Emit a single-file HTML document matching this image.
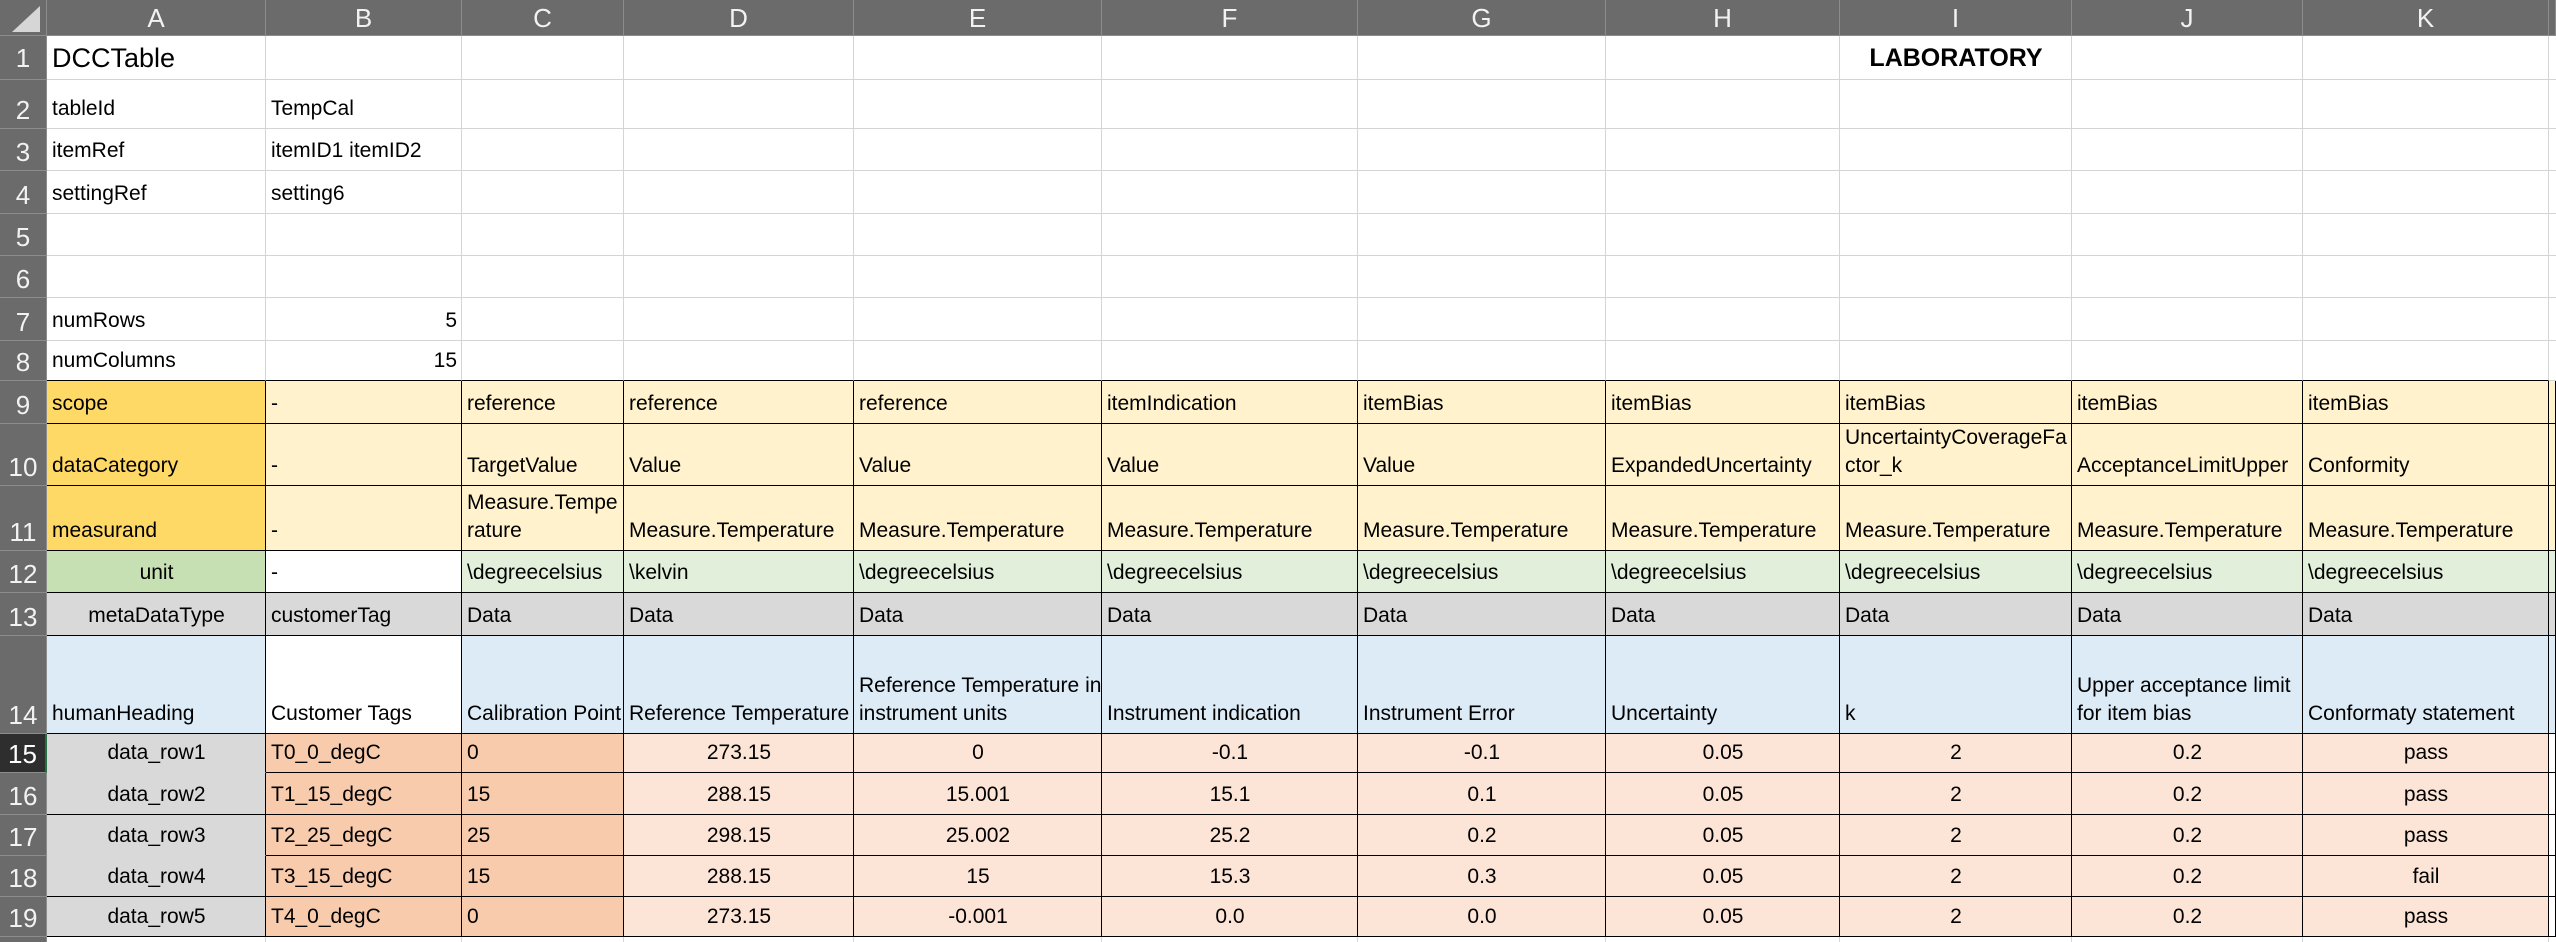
<!DOCTYPE html>
<html><head><meta charset="utf-8"><style>
html,body{margin:0;padding:0;background:#fff;width:2556px;height:942px;overflow:hidden}
table{border-collapse:separate;border-spacing:0;table-layout:fixed;width:2556px;font-family:"Liberation Sans",sans-serif;font-size:21px;color:#000}
td{border-right:1px solid #d4d4d4;border-bottom:1px solid #d4d4d4;padding:0 4px 5px 5px;vertical-align:bottom;white-space:nowrap;overflow:hidden;line-height:28px;box-sizing:border-box}
td.h{background:#6b6b6b;color:#f2f2f2;text-align:center;vertical-align:middle;font-size:26px;border-right:1px solid #8c8c8c;border-bottom:1px solid #8c8c8c;padding:0}
td.rn{background:#6b6b6b;color:#f2f2f2;text-align:center;font-size:26px;border-right:1px solid #8c8c8c;border-bottom:1px solid #8c8c8c;padding:0 0 4px 0;vertical-align:bottom}
td.sel{background:#2e2e2e;color:#fff;border-right:2px solid #217346}
tr.k td:not(.rn){border-right:1px solid #000;border-bottom:1px solid #000}
tr.kb td:not(.rn):not(.l){border-bottom:1px solid #000}
td.l{border-right:none}
.y{background:#ffd966}.c{background:#fff2cc}.g{background:#e2efda}.gA{background:#c6e0b4}.gr{background:#d9d9d9}.b{background:#ddebf7}.o{background:#f8cbad}.p{background:#fce4d6}.w{background:#fff}
.ctr{text-align:center}.r{text-align:right}
tr.k td.nb{border-bottom:1px solid #d9d9d9}
</style></head><body>
<table>
<colgroup><col style="width:47px"><col style="width:219px"><col style="width:196px"><col style="width:162px"><col style="width:230px"><col style="width:248px"><col style="width:256px"><col style="width:248px"><col style="width:234px"><col style="width:232px"><col style="width:231px"><col style="width:246px"><col style="width:7px"></colgroup>
<tr style="height:36px"><td class="h" style="position:relative"><svg width="47" height="36" style="position:absolute;left:0;top:0"><polygon points="40,6 40,32 12,32" fill="#d6d6d6"/></svg></td><td class="h">A</td><td class="h">B</td><td class="h">C</td><td class="h">D</td><td class="h">E</td><td class="h">F</td><td class="h">G</td><td class="h">H</td><td class="h">I</td><td class="h">J</td><td class="h">K</td><td class="h"></td></tr>
<tr style="height:44px"><td class="rn" style="vertical-align:middle;padding:0">1</td><td style="font-size:27px;vertical-align:middle;padding-bottom:0">DCCTable</td><td></td><td></td><td></td><td></td><td></td><td></td><td></td><td class="ctr" style="font-weight:bold;font-size:25px;vertical-align:middle;padding-bottom:0;overflow:visible">LABORATORY</td><td></td><td></td><td class="l"></td></tr>
<tr style="height:49px"><td class="rn">2</td><td>tableId</td><td>TempCal</td><td></td><td></td><td></td><td></td><td></td><td></td><td></td><td></td><td></td><td class="l"></td></tr>
<tr style="height:42px"><td class="rn">3</td><td>itemRef</td><td>itemID1 itemID2</td><td></td><td></td><td></td><td></td><td></td><td></td><td></td><td></td><td></td><td class="l"></td></tr>
<tr style="height:43px"><td class="rn">4</td><td>settingRef</td><td>setting6</td><td></td><td></td><td></td><td></td><td></td><td></td><td></td><td></td><td></td><td class="l"></td></tr>
<tr style="height:42px"><td class="rn">5</td><td></td><td></td><td></td><td></td><td></td><td></td><td></td><td></td><td></td><td></td><td></td><td class="l"></td></tr>
<tr style="height:42px"><td class="rn">6</td><td></td><td></td><td></td><td></td><td></td><td></td><td></td><td></td><td></td><td></td><td></td><td class="l"></td></tr>
<tr style="height:43px"><td class="rn">7</td><td>numRows</td><td class="r">5</td><td></td><td></td><td></td><td></td><td></td><td></td><td></td><td></td><td></td><td class="l"></td></tr>
<tr style="height:40px" class="kb"><td class="rn">8</td><td>numColumns</td><td class="r">15</td><td></td><td></td><td></td><td></td><td></td><td></td><td></td><td></td><td></td><td class="l"></td></tr>
<tr style="height:43px" class="k"><td class="rn">9</td><td class="y">scope</td><td class="c">-</td><td class="c">reference</td><td class="c">reference</td><td class="c">reference</td><td class="c">itemIndication</td><td class="c">itemBias</td><td class="c">itemBias</td><td class="c">itemBias</td><td class="c">itemBias</td><td class="c">itemBias</td><td class="c l"></td></tr>
<tr style="height:62px" class="k"><td class="rn">10</td><td class="y">dataCategory</td><td class="c">-</td><td class="c">TargetValue</td><td class="c">Value</td><td class="c">Value</td><td class="c">Value</td><td class="c">Value</td><td class="c">ExpandedUncertainty</td><td class="c">UncertaintyCoverageFa<br>ctor_k</td><td class="c">AcceptanceLimitUpper</td><td class="c">Conformity</td><td class="c l"></td></tr>
<tr style="height:65px" class="k"><td class="rn">11</td><td class="y">measurand</td><td class="c">-</td><td class="c">Measure.Tempe<br>rature</td><td class="c">Measure.Temperature</td><td class="c">Measure.Temperature</td><td class="c">Measure.Temperature</td><td class="c">Measure.Temperature</td><td class="c">Measure.Temperature</td><td class="c">Measure.Temperature</td><td class="c">Measure.Temperature</td><td class="c">Measure.Temperature</td><td class="c l"></td></tr>
<tr style="height:42px" class="k"><td class="rn">12</td><td class="gA ctr">unit</td><td class="w">-</td><td class="g">\degreecelsius</td><td class="g">\kelvin</td><td class="g">\degreecelsius</td><td class="g">\degreecelsius</td><td class="g">\degreecelsius</td><td class="g">\degreecelsius</td><td class="g">\degreecelsius</td><td class="g">\degreecelsius</td><td class="g">\degreecelsius</td><td class="g l"></td></tr>
<tr style="height:43px" class="k"><td class="rn">13</td><td class="gr ctr">metaDataType</td><td class="gr">customerTag</td><td class="gr">Data</td><td class="gr">Data</td><td class="gr">Data</td><td class="gr">Data</td><td class="gr">Data</td><td class="gr">Data</td><td class="gr">Data</td><td class="gr">Data</td><td class="gr">Data</td><td class="gr l"></td></tr>
<tr style="height:98px" class="k"><td class="rn">14</td><td class="b">humanHeading</td><td class="w">Customer Tags</td><td class="b">Calibration Point</td><td class="b">Reference Temperature</td><td class="b">Reference Temperature in<br>instrument units</td><td class="b">Instrument indication</td><td class="b">Instrument Error</td><td class="b">Uncertainty</td><td class="b">k</td><td class="b">Upper acceptance limit<br>for item bias</td><td class="b">Conformaty statement</td><td class="b l"></td></tr>
<tr style="height:39px" class="k"><td class="rn sel">15</td><td class="gr ctr nb">data_row1</td><td class="o">T0_0_degC</td><td class="o">0</td><td class="p ctr">273.15</td><td class="p ctr">0</td><td class="p ctr">-0.1</td><td class="p ctr">-0.1</td><td class="p ctr">0.05</td><td class="p ctr">2</td><td class="p ctr">0.2</td><td class="p ctr">pass</td><td class="w l"></td></tr>
<tr style="height:42px" class="k"><td class="rn">16</td><td class="gr ctr">data_row2</td><td class="o">T1_15_degC</td><td class="o">15</td><td class="p ctr">288.15</td><td class="p ctr">15.001</td><td class="p ctr">15.1</td><td class="p ctr">0.1</td><td class="p ctr">0.05</td><td class="p ctr">2</td><td class="p ctr">0.2</td><td class="p ctr">pass</td><td class="w l"></td></tr>
<tr style="height:41px" class="k"><td class="rn">17</td><td class="gr ctr nb">data_row3</td><td class="o">T2_25_degC</td><td class="o">25</td><td class="p ctr">298.15</td><td class="p ctr">25.002</td><td class="p ctr">25.2</td><td class="p ctr">0.2</td><td class="p ctr">0.05</td><td class="p ctr">2</td><td class="p ctr">0.2</td><td class="p ctr">pass</td><td class="w l"></td></tr>
<tr style="height:41px" class="k"><td class="rn">18</td><td class="gr ctr">data_row4</td><td class="o">T3_15_degC</td><td class="o">15</td><td class="p ctr">288.15</td><td class="p ctr">15</td><td class="p ctr">15.3</td><td class="p ctr">0.3</td><td class="p ctr">0.05</td><td class="p ctr">2</td><td class="p ctr">0.2</td><td class="p ctr">fail</td><td class="w l"></td></tr>
<tr style="height:40px" class="k"><td class="rn">19</td><td class="gr ctr">data_row5</td><td class="o">T4_0_degC</td><td class="o">0</td><td class="p ctr">273.15</td><td class="p ctr">-0.001</td><td class="p ctr">0.0</td><td class="p ctr">0.0</td><td class="p ctr">0.05</td><td class="p ctr">2</td><td class="p ctr">0.2</td><td class="p ctr">pass</td><td class="w l"></td></tr>
<tr style="height:10px"><td class="rn"></td><td></td><td></td><td></td><td></td><td></td><td></td><td></td><td></td><td></td><td></td><td></td><td class="l"></td></tr>
</table>
</body></html>
